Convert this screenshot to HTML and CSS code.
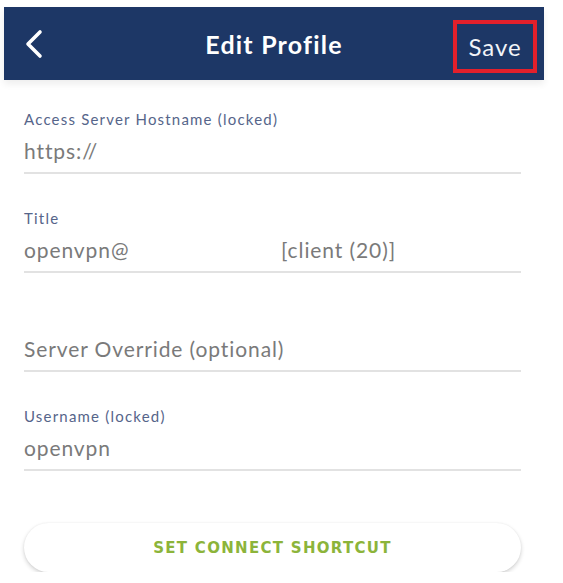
FILE: index.html
```html
<!DOCTYPE html>
<html lang="en">
<head>
  <meta charset="UTF-8">
  <meta name="viewport" content="width=device-width, initial-scale=1.0">
  <title>Edit Profile</title>
  <link rel="stylesheet" href="styles.css">
</head>
<body>
  <div class="screen">
    <header class="topbar">
      <button class="back-button" aria-label="Back">
        <svg width="20" height="30" viewBox="0 0 20 30">
          <path d="M16 3 L4 15 L16 27" fill="none" stroke="#fff" stroke-width="3.6" stroke-linecap="round" stroke-linejoin="round"/>
        </svg>
      </button>
      <h1>Edit Profile</h1>
      <div class="save-wrap">
        <button class="save-button">Save</button>
      </div>
    </header>

    <form class="profile-form">
      <div class="field">
        <label>Access Server Hostname (locked)</label>
        <div class="value">https://</div>
      </div>

      <div class="field">
        <label>Title</label>
        <div class="value">
          <span class="title-user">openvpn@</span>
          <span>[client (20)]</span>
        </div>
      </div>

      <div class="field">
        <label class="empty"></label>
        <div class="value">Server Override (optional)</div>
      </div>

      <div class="field">
        <label>Username (locked)</label>
        <div class="value">openvpn</div>
      </div>

      <button type="button" class="shortcut-button">SET CONNECT SHORTCUT</button>
    </form>
  </div>
</body>
</html>
```

FILE: styles.css
```css
* {
  margin: 0;
  padding: 0;
  box-sizing: border-box;
}

body {
  font-family: 'Lato', 'Open Sans', sans-serif;
  background: #fff;
  color: #7a7a7a;
}

.screen {
  width: 540px;
  margin: 7px 0 0 4px;
}

.topbar {
  height: 73px;
  background: #1d3766;
  display: grid;
  grid-template-columns: 1fr auto 1fr;
  align-items: center;
  box-shadow: 0 4px 7px rgba(0, 0, 0, 0.07);
  position: relative;
}

.back-button {
  background: none;
  border: none;
  width: 20px;
  height: 30px;
  margin-left: 20px;
  display: flex;
}

.topbar h1 {
  color: #fff;
  font-size: 25px;
  font-weight: 700;
  letter-spacing: 1.2px;
}

.save-wrap {
  display: flex;
  justify-content: flex-end;
  padding-right: 7px;
}

.save-button {
  width: 84px;
  height: 53px;
  margin-top: 6px;
  border: 4px solid #e3202b;
  background: none;
  color: #f2f4f8;
  font-family: inherit;
  font-size: 24px;
  letter-spacing: 1px;
}

.profile-form {
  padding: 31px 23px 0 20px;
}

.field {
  border-bottom: 2px solid #e2e2e2;
  margin-bottom: 36px;
}

.field label {
  display: block;
  height: 16px;
  font-size: 15px;
  line-height: 16px;
  letter-spacing: 1.2px;
  color: #56658a;
}

.field .value {
  font-size: 21px;
  line-height: 28px;
  letter-spacing: 0.9px;
  padding: 10px 0 7px;
  display: flex;
}

.title-user {
  width: 257px;
}

.shortcut-button {
  display: block;
  width: 100%;
  height: 49px;
  margin-top: 52px;
  border: none;
  border-radius: 25px;
  background: #fff;
  box-shadow: 0 2px 4px rgba(0, 0, 0, 0.18), 0 0 2px rgba(0, 0, 0, 0.06);
  color: #8cb43a;
  font-family: 'DejaVu Sans', sans-serif;
  font-size: 15px;
  font-weight: 700;
  letter-spacing: 1.3px;
}
```
